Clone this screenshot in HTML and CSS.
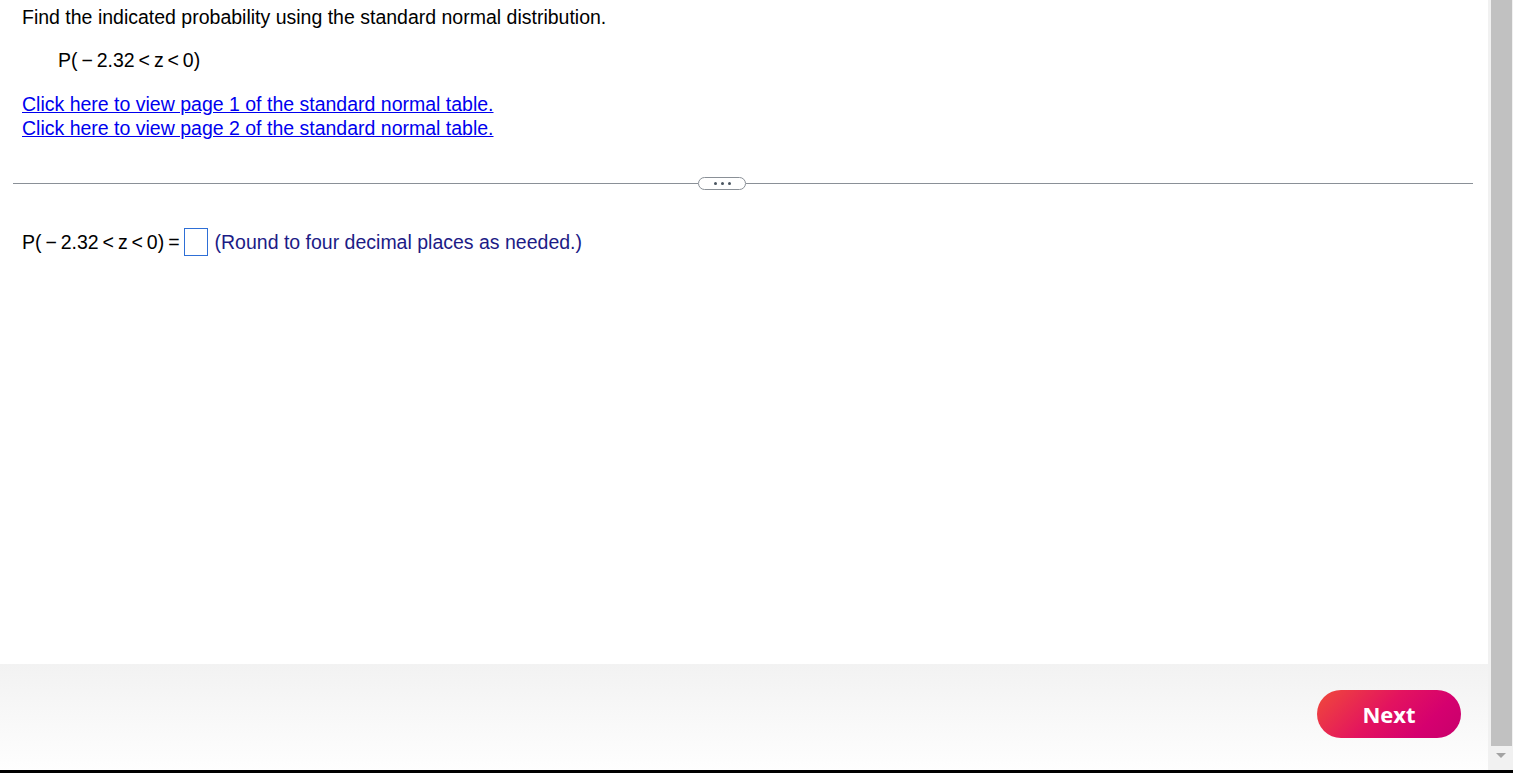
FILE: index.html
```html
<!DOCTYPE html>
<html>
<head>
<meta charset="utf-8">
<link rel="stylesheet" href="styles.css">
</head>
<body>
<div class="frame">
  <div class="main">
    <div class="question">
      <p class="prompt">Find the indicated probability using the standard normal distribution.</p>
      <p class="expr">P( − 2.32 &lt; z &lt; 0)</p>
      <div class="links">
        <a href="#">Click here to view page 1 of the standard normal table.</a>
        <a href="#">Click here to view page 2 of the standard normal table.</a>
      </div>
    </div>
    <div class="divider">
      <span class="line left"></span>
      <span class="pill"><i></i><i></i><i></i></span>
      <span class="line"></span>
    </div>
    <div class="answer">
      <span class="eq">P( − 2.32 &lt; z &lt; 0) =</span>
      <span class="box"></span>
      <span class="hint">(Round to four decimal places as needed.)</span>
    </div>
    <div class="spacer"></div>
    <div class="footer">
      <button class="next">Next</button>
    </div>
  </div>
  <div class="scrollbar">
    <div class="thumb"></div>
    <div class="arrow"></div>
  </div>
</div>
<div class="bottombar"></div>
</body>
</html>
```
FILE: styles.css
```css
html, body {
  margin: 0;
  padding: 0;
  height: 773px;
  overflow: hidden;
  background: #fff;
  font-family: "Liberation Sans", Arial, sans-serif;
}
.frame {
  display: flex;
  height: 770px;
}
.main {
  width: 1488px;
  display: flex;
  flex-direction: column;
}
.question {
  padding: 5px 0 0 22px;
  color: #000;
  font-size: 19.5px;
}
.prompt {
  margin: 0;
  line-height: 24px;
}
.expr {
  margin: 19px 0 0 36px;
  line-height: 24px;
  word-spacing: -1.5px;
}
.links {
  margin-top: 20px;
  display: flex;
  flex-direction: column;
}
.links a {
  color: #0000ee;
  line-height: 24px;
  text-decoration: underline;
  align-self: flex-start;
}
.divider {
  margin: 36px 15px 0 13px;
  display: flex;
  align-items: center;
  height: 14px;
}
.line {
  flex: 1;
  height: 1px;
  background: #8a9097;
}
.line.left {
  flex: 0 0 685px;
}
.pill {
  width: 46px;
  height: 11px;
  border: 1px solid #8a9097;
  border-radius: 7px;
  display: flex;
  align-items: center;
  justify-content: center;
  gap: 4px;
}
.pill i {
  width: 3px;
  height: 3px;
  border-radius: 50%;
  background: #4a5560;
}
.answer {
  margin: 38px 0 0 22px;
  display: flex;
  align-items: center;
  font-size: 19.5px;
  line-height: 24px;
}
.eq { color: #000; word-spacing: -1.5px; }
.box {
  width: 22px;
  height: 26px;
  border: 1px solid #2e6fd6;
  margin: 0 7px 0 4px;
}
.hint { color: #1c1b86; }
.spacer { flex: 1; }
.footer {
  height: 106px;
  background: linear-gradient(#f2f2f2, #fefefe);
  display: flex;
  justify-content: flex-end;
  align-items: flex-start;
  padding: 26px 27px 0 0;
  box-sizing: border-box;
}
.next {
  width: 144px;
  height: 48px;
  border: none;
  border-radius: 24px;
  background: linear-gradient(135deg, #f04a3a 0%, #e3135f 45%, #d5006f 75%, #c8006c 100%);
  color: #fff;
  font-family: "Open Sans", "Liberation Sans", sans-serif;
  font-weight: 700;
  font-size: 22px;
  padding: 0;
}
.scrollbar {
  width: 25px;
  background: #f1f1f1;
  display: flex;
  flex-direction: column;
  align-items: center;
}
.thumb {
  width: 21px;
  margin-left: 2px;
  height: 746px;
  background: #c1c1c1;
}
.arrow {
  margin-top: 7px;
  width: 0;
  height: 0;
  border-left: 5px solid transparent;
  border-right: 5px solid transparent;
  border-top: 5px solid #a3a3a3;
}
.bottombar {
  height: 3px;
  background: #000;
}
```
